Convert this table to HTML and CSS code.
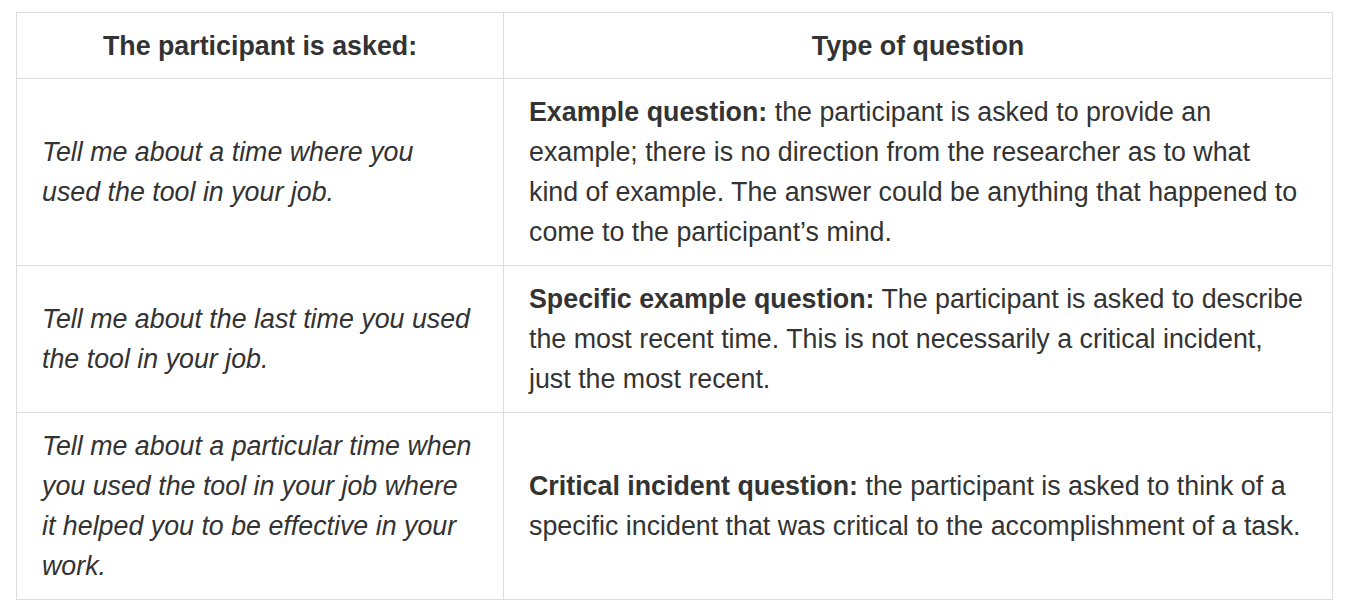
FILE: index.html
```html
<!DOCTYPE html>
<html lang="en">
<head>
<meta charset="utf-8">
<title>Question types</title>
<link rel="stylesheet" href="styles.css">
</head>
<body>
<table class="qtable">
  <colgroup>
    <col class="col-asked">
    <col class="col-type">
  </colgroup>
  <thead>
    <tr>
      <th>The participant is asked:</th>
      <th>Type of question</th>
    </tr>
  </thead>
  <tbody>
    <tr>
      <td class="asked">Tell me about a time where you used the tool in your job.</td>
      <td class="type"><strong>Example question:</strong> the participant is asked to provide an example; there is no direction from the researcher as to what kind of example. The answer could be anything that happened to come to the participant’s mind.</td>
    </tr>
    <tr>
      <td class="asked">Tell me about the last time you used the tool in your job.</td>
      <td class="type"><strong>Specific example question:</strong> The participant is asked to describe the most recent time. This is not necessarily a critical incident, just the most recent.</td>
    </tr>
    <tr>
      <td class="asked">Tell me about a particular time when you used the tool in your job where it helped you to be effective in your work.</td>
      <td class="type"><strong>Critical incident question:</strong> the participant is asked to think of a specific incident that was critical to the accomplishment of a task.</td>
    </tr>
  </tbody>
</table>
</body>
</html>
```

FILE: styles.css
```css
html, body {
  margin: 0;
  padding: 0;
  background: #ffffff;
}

body {
  padding: 12px 12px 0 16px;
  font-family: "Liberation Sans", Arial, sans-serif;
  font-size: 26.8px;
  line-height: 40px;
  color: #333333;
}

.qtable {
  width: 1317px;
  border-collapse: collapse;
  border: 1px solid #dddddd;
}

.col-asked {
  width: 487px;
}

.qtable th,
.qtable td {
  border: 1px solid #dddddd;
  padding: 13px 25px;
  vertical-align: middle;
  text-align: left;
}

.qtable th {
  padding: 13px 25px 12px 25px;
  text-align: center;
  font-weight: bold;
}

.qtable td.asked {
  font-style: italic;
}

.qtable td.type {
  padding-right: 28.5px;
}

.qtable strong {
  font-weight: bold;
}
```
